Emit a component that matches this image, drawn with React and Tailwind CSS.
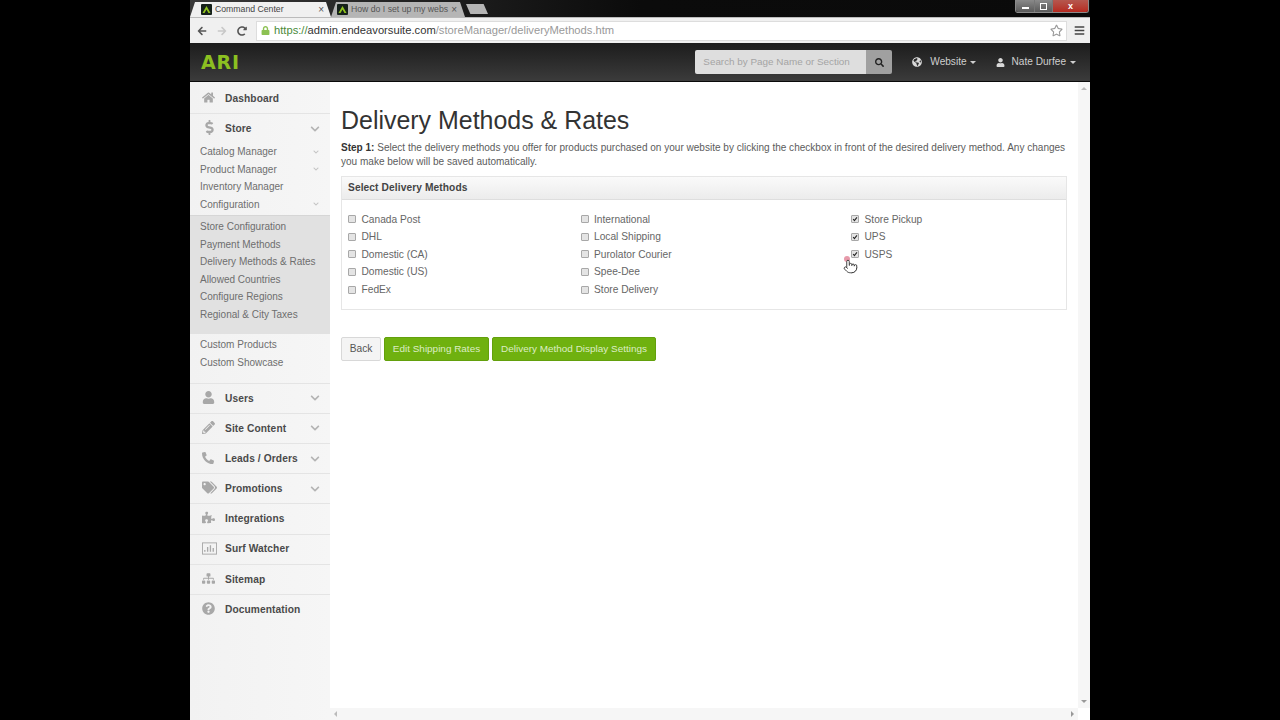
import React from "react";
import { FaHome, FaDollarSign, FaUser, FaPencilAlt, FaPhone, FaTags, FaPuzzlePiece, FaSitemap, FaQuestionCircle, FaChevronDown, FaSearch, FaGlobeAmericas, FaArrowLeft, FaArrowRight, FaRedoAlt, FaLock, FaRegStar, FaBars } from "react-icons/fa";
import { Pointer } from "lucide-react";

const Fav = () => (
  <span className="w-[11px] h-[11px] bg-[#15201a] rounded-[1px] flex items-center justify-center shrink-0">
    <svg viewBox="0 0 10 10" className="w-[9px] h-[9px]"><path d="M5 1 L9.5 9 H7.2 L5 5 L2.8 9 H0.5 Z" fill="#8fc31f" /></svg>
  </span>
);

const BoxChart = ({ className }) => (
  <svg viewBox="0 0 16 13" className={className}>
    <rect x="0.5" y="0.5" width="15" height="12" fill="none" stroke="currentColor" />
    <path d="M3 10v-2M6 10V5M9 10V3M12 10V6" stroke="currentColor" strokeWidth="1.4" />
  </svg>
);

const Row = ({ icon: I, label, chevron, iconCls = "w-[13px] h-[13px]", border = true }) => (
  <div className={`h-[30.2px] shrink-0 flex items-center pl-[12px] pr-[10px] ${border ? "border-b border-[#e4e4e4]" : ""}`}>
    <span className="w-[23px] flex items-center -mt-[2px]"><I className={`${iconCls} text-[#a8a8a8]`} /></span>
    <span className="text-[10.2px] font-bold text-[#4a4a4a] tracking-[0.1px]">{label}</span>
    {chevron && <FaChevronDown className="ml-auto text-[10px] text-[#b4b4b4]" />}
  </div>
);

const Sub = ({ label, chevron }) => (
  <div className="h-[17.5px] flex items-center pl-[10px] pr-[11px] text-[10px] text-[#6e6e6e] whitespace-nowrap">
    <span>{label}</span>
    {chevron && <FaChevronDown className="ml-auto text-[6px] text-[#c4c4c4]" />}
  </div>
);

const Check = ({ label, checked }) => (
  <div className="h-[17.6px] flex items-center gap-[5.5px] text-[10.2px] text-[#666]">
    <span className="w-[8px] h-[8px] rounded-[1px] border border-[#a8a8a8] bg-[#e4e4e4] flex items-center justify-center text-[#222] shrink-0">
      {checked && <svg viewBox="0 0 8 8" className="w-[8px] h-[8px]"><path d="M1.5 4 L3.2 6 L6.6 1.8" fill="none" stroke="#222" strokeWidth="1.5" /></svg>}
    </span>
    <span>{label}</span>
  </div>
);

export default function App() {
  return (
    <div className="w-[1280px] h-[720px] bg-black flex justify-center overflow-hidden font-['Liberation_Sans',Arial,sans-serif]">
      <div className="w-[900px] h-full flex flex-col bg-white relative">
        {/* tab strip */}
        <div className="h-[17px] shrink-0 bg-gradient-to-r from-[#3a3a3a] via-[#0b0b0b] to-[#0a0a0a] flex items-end relative">
          <div className="w-[141px] h-[15px] bg-[#f0f0f0] flex items-center pl-[11px] pr-[5px] gap-[3px] [clip-path:polygon(0_100%,5px_0,calc(100%-5px)_0,100%_100%)] text-[8.7px] text-[#444]">
            <Fav />
            <span>Command Center</span>
            <span className="ml-auto mr-[2px] text-[10px] text-[#555] leading-none">×</span>
          </div>
          <div className="w-[134px] h-[15px] bg-[#b5b5b5] flex items-center pl-[6px] pr-[8px] gap-[3px] [clip-path:polygon(0_100%,5px_0,calc(100%-5px)_0,100%_100%)] text-[8.7px] text-[#555]">
            <Fav />
            <span className="whitespace-nowrap w-[96px]">How do I set up my webs</span>
            <span className="ml-auto text-[10px] text-[#555] leading-none">×</span>
          </div>
          <div className="w-[22px] h-[10px] ml-[1px] mb-[3px] bg-[#b5b5b5] [clip-path:polygon(0_0,80%_0,100%_100%,20%_100%)]" />
          <div className="ml-auto self-start h-[13px] w-[74px] mr-[1px] flex border border-[#8a8a8a] border-t-0 rounded-b-[3px] overflow-hidden">
            <div className="w-[19px] bg-gradient-to-b from-[#8a8a8a] to-[#5a5a5a] flex items-center justify-center border-r border-[#777]"><span className="w-[7px] h-[2px] mt-[3px] bg-white" /></div>
            <div className="w-[18px] bg-gradient-to-b from-[#8a8a8a] to-[#5a5a5a] flex items-center justify-center border-r border-[#777]"><span className="w-[7px] h-[7px] border border-white" /></div>
            <div className="flex-1 bg-gradient-to-b from-[#b5574e] to-[#b5271e] flex items-center justify-center text-white text-[9px] font-bold leading-none">x</div>
          </div>
        </div>
        {/* toolbar */}
        <div className="h-[26px] shrink-0 bg-[#f0f0f0] border-t border-[#bbb] flex items-center pl-[7px] pr-[5px]">
          <FaArrowLeft className="text-[10px] text-[#555]" />
          <FaArrowRight className="text-[10px] text-[#c8c8c8] ml-[10px]" />
          <FaRedoAlt className="text-[10px] text-[#555] ml-[10px]" />
          <div className="ml-[9px] flex-1 h-[20px] bg-white border border-[#ddd] flex items-center pl-[4px] pr-[3px] text-[11.2px]">
            <FaLock className="text-[9px] text-[#8cc152] mr-[4px]" />
            <span className="text-[#4a8a3a]">https://</span>
            <span className="text-[#333]">admin.endeavorsuite.com</span>
            <span className="text-[#999]">/storeManager/deliveryMethods.htm</span>
            <FaRegStar className="ml-auto text-[13px] text-[#999]" />
          </div>
          <FaBars className="ml-[7px] text-[11px] text-[#444]" />
        </div>
        {/* app header */}
        <div className="h-[39px] shrink-0 bg-gradient-to-b from-[#1d1d1d] to-[#3b3b3b] border-b border-[#0a0a0a] flex items-center pl-[11px] pr-[14px]">
          <span className="font-['DejaVu_Sans',sans-serif] text-[19px] font-bold text-[#8cc021] leading-none tracking-[0.8px]">ARI</span>
          <div className="ml-auto flex h-[24px] w-[197px] rounded-[2px] overflow-hidden">
            <div className="flex-1 bg-[#dedede] flex items-center pl-[8px] text-[#a4a4a4] text-[9.9px]">Search by Page Name or Section</div>
            <div className="w-[26px] bg-[#a0a0a0] flex items-center justify-center"><FaSearch className="text-[9px] text-[#222]" /></div>
          </div>
          <FaGlobeAmericas className="ml-[20px] text-[10px] text-[#d8d8d8]" />
          <span className="ml-[8px] text-[10.1px] text-[#cfcfcf]">Website</span>
          <span className="ml-[3px] border-x-[3px] border-x-transparent border-t-[3px] border-t-[#cfcfcf]" />
          <FaUser className="ml-[20px] text-[9px] text-[#d8d8d8]" />
          <span className="ml-[7px] text-[10.1px] text-[#cfcfcf]">Nate Durfee</span>
          <span className="ml-[4px] border-x-[3px] border-x-transparent border-t-[3px] border-t-[#cfcfcf]" />
        </div>
        {/* body */}
        <div className="flex-1 flex min-h-0">
          <aside className="w-[140px] shrink-0 bg-gradient-to-r from-[#f2f2f2] to-[#f6f6f6] flex flex-col pt-[2px]">
            <Row icon={FaHome} label="Dashboard" />
            <div className="-mt-[0.6px] -mb-[0.8px]"><Row icon={FaDollarSign} label="Store" chevron iconCls="w-[15px] h-[15px]" border={false} /></div>
            <div>
              <Sub label="Catalog Manager" chevron />
              <Sub label="Product Manager" chevron />
              <Sub label="Inventory Manager" />
              <Sub label="Configuration" chevron />
            </div>
            <div className="mt-[2px] h-[119px] bg-[#e1e1e1] pt-[2.1px] border-t border-[#d6d6d6]">
              <Sub label="Store Configuration" />
              <Sub label="Payment Methods" />
              <Sub label="Delivery Methods & Rates" />
              <Sub label="Allowed Countries" />
              <Sub label="Configure Regions" />
              <Sub label="Regional & City Taxes" />
            </div>
            <div className="pt-[2px] pb-[11.6px] border-b border-[#e4e4e4]">
              <Sub label="Custom Products" />
              <Sub label="Custom Showcase" />
            </div>
            <Row icon={FaUser} label="Users" chevron />
            <Row icon={FaPencilAlt} label="Site Content" chevron />
            <Row icon={FaPhone} label="Leads / Orders" chevron iconCls="w-[12px] h-[12px] scale-x-[-1]" />
            <Row icon={FaTags} label="Promotions" chevron iconCls="w-[15px] h-[15px]" />
            <Row icon={FaPuzzlePiece} label="Integrations" />
            <Row icon={BoxChart} label="Surf Watcher" iconCls="w-[15px] h-[13px]" />
            <Row icon={FaSitemap} label="Sitemap" />
            <Row icon={FaQuestionCircle} label="Documentation" border={false} />
          </aside>
          <main className="flex-1 min-w-0 flex flex-col">
            <div className="flex-1 flex min-h-0">
              <div className="flex-1 min-w-0 pl-[11px] pr-[11px]">
                <h1 className="mt-[24px] text-[24.95px] leading-[28px] font-normal text-[#333]">Delivery Methods & Rates</h1>
                <p className="mt-[7px] -mr-[4px] text-[10.04px] leading-[13.5px] text-[#5c5c5c]">
                  <b className="text-[#333]">Step 1:</b> Select the delivery methods you offer for products purchased on your website by clicking the checkbox in front of the desired delivery method. Any changes you make below will be saved automatically.
                </p>
                <section className="mt-[8px] h-[134px] border border-[#e6e6e6]">
                  <div className="h-[23px] bg-gradient-to-b from-[#fafafa] to-[#ececec] border-b border-[#dedede] flex items-center pl-[6px] text-[10.2px] font-bold text-[#444] tracking-[0.1px]">Select Delivery Methods</div>
                  <div className="flex pl-[6px] pt-[10.4px]">
                    <div className="w-[232.5px]">
                      {["Canada Post", "DHL", "Domestic (CA)", "Domestic (US)", "FedEx"].map((l) => <Check key={l} label={l} />)}
                    </div>
                    <div className="w-[270.5px]">
                      {["International", "Local Shipping", "Purolator Courier", "Spee-Dee", "Store Delivery"].map((l) => <Check key={l} label={l} />)}
                    </div>
                    <div>
                      {["Store Pickup", "UPS", "USPS"].map((l) => <Check key={l} label={l} checked />)}
                    </div>
                  </div>
                </section>
                <div className="mt-[27px] flex gap-[3px] text-[9.95px]">
                  <button className="w-[40px] h-[24px] bg-[#f4f4f4] border border-[#d8d8d8] rounded-[2px] text-[#555] text-[10.2px]">Back</button>
                  <button className="w-[105px] h-[24px] bg-[#6fb10f] border border-[#63a00c] rounded-[2px] text-[#dcedc4]">Edit Shipping Rates</button>
                  <button className="w-[164px] h-[24px] bg-[#6fb10f] border border-[#63a00c] rounded-[2px] text-[#dcedc4]">Delivery Method Display Settings</button>
                </div>
              </div>
              <div className="w-[12px] shrink-0 bg-[#f6f6f6] flex flex-col items-center justify-between py-[5px]">
                <span className="border-x-[3px] border-x-transparent border-b-[3px] border-b-[#bbb]" />
                <span className="border-x-[3px] border-x-transparent border-t-[3px] border-t-[#999]" />
              </div>
            </div>
            <div className="h-[12px] shrink-0 flex">
              <div className="flex-1 bg-[#f6f6f6] flex items-center justify-between px-[4px]">
                <span className="border-y-[3px] border-y-transparent border-r-[3px] border-r-[#bbb]" />
                <span className="border-y-[3px] border-y-transparent border-l-[3px] border-l-[#999]" />
              </div>
              <div className="w-[12px] bg-white" />
            </div>
          </main>
        </div>
        {/* cursor */}
        <div className="absolute left-[654px] top-[256px] w-[6px] h-[6px] rounded-full bg-[#e79aaa]" />
        <Pointer className="absolute left-[653px] top-[259px] w-[15px] h-[15px] text-[#333] fill-white" strokeWidth={1.5} />
      </div>
    </div>
  );
}
